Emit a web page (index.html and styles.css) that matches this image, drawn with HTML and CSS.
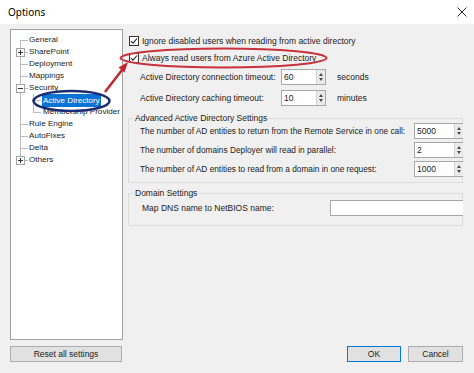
FILE: index.html
```html
<!DOCTYPE html>
<html lang="en">
<head>
    <meta charset="UTF-8">
    <meta name="viewport" content="width=device-width, initial-scale=1.0">
    <title>Options</title>
    <link rel="stylesheet" href="styles.css">
</head>
<body>
<div class="window">
    <div class="titlebar">
        <span class="title">Options</span>
        <svg class="close" width="10" height="10" viewBox="0 0 10 10"><path d="M0.5 0.5L9.5 9.5M9.5 0.5L0.5 9.5" stroke="#222" stroke-width="1"/></svg>
    </div>
    <div class="dialog">
        <div class="main">
            <ul class="tree">
                <li class="node first"><span class="gutter"></span><span class="text">General</span></li>
                <li class="node"><span class="gutter"><i class="exp plus"></i></span><span class="text">SharePoint</span></li>
                <li class="node"><span class="gutter"></span><span class="text">Deployment</span></li>
                <li class="node"><span class="gutter"></span><span class="text">Mappings</span></li>
                <li class="node"><span class="gutter"><i class="exp"></i></span><span class="text">Security</span></li>
                <li class="node child"><span class="gutter"></span><span class="text selected">Active Directory</span></li>
                <li class="node child last-child"><span class="gutter"></span><span class="text">Membership Provider</span></li>
                <li class="node"><span class="gutter"></span><span class="text">Rule Engine</span></li>
                <li class="node"><span class="gutter"></span><span class="text">AutoFixes</span></li>
                <li class="node"><span class="gutter"></span><span class="text">Delta</span></li>
                <li class="node last"><span class="gutter"><i class="exp plus"></i></span><span class="text">Others</span></li>
            </ul>
            <div class="panel">
                <label class="check"><span class="box"><svg width="8" height="8" viewBox="0 0 8 8"><path d="M1 4.2L3 6.2L7 1.5" fill="none" stroke="#222" stroke-width="1.1"/></svg></span>Ignore disabled users when reading from active directory</label>
                <label class="check"><span class="box"><svg width="8" height="8" viewBox="0 0 8 8"><path d="M1 4.2L3 6.2L7 1.5" fill="none" stroke="#222" stroke-width="1.1"/></svg></span>Always read users from Azure Active Directory</label>

                <div class="field timeout">
                    <span class="field-label">Active Directory connection timeout:</span>
                    <span class="num"><span class="val">60</span><span class="spin"><i class="up"></i><i class="down"></i></span></span>
                    <span class="unit">seconds</span>
                </div>
                <div class="field timeout">
                    <span class="field-label">Active Directory caching timeout:</span>
                    <span class="num"><span class="val">10</span><span class="spin"><i class="up"></i><i class="down"></i></span></span>
                    <span class="unit">minutes</span>
                </div>

                <div class="group advanced">
                    <div class="group-title">Advanced Active Directory Settings</div>
                    <div class="field">
                        <span class="field-label">The number of AD entities to return from the Remote Service in one call:</span>
                        <span class="num wide"><span class="val">5000</span><span class="spin"><i class="up"></i><i class="down"></i></span></span>
                    </div>
                    <div class="field">
                        <span class="field-label">The number of domains Deployer will read in parallel:</span>
                        <span class="num wide"><span class="val">2</span><span class="spin"><i class="up"></i><i class="down"></i></span></span>
                    </div>
                    <div class="field">
                        <span class="field-label">The number of AD entities to read from a domain in one request:</span>
                        <span class="num wide"><span class="val">1000</span><span class="spin"><i class="up"></i><i class="down"></i></span></span>
                    </div>
                </div>

                <div class="group domain">
                    <div class="group-title">Domain Settings</div>
                    <div class="field">
                        <span class="field-label">Map DNS name to NetBIOS name:</span>
                        <span class="textbox"></span>
                    </div>
                </div>
            </div>
        </div>
        <div class="footer">
            <button class="btn reset">Reset all settings</button>
            <div class="actions">
                <button class="btn ok">OK</button>
                <button class="btn cancel">Cancel</button>
            </div>
        </div>
    </div>

    <!-- hand-drawn callouts on top of the screenshot -->
    <svg class="annotations" width="474" height="373" viewBox="0 0 474 373">
        <ellipse cx="223.5" cy="58" rx="103" ry="9.5" fill="none" stroke="#c8323c" stroke-width="2"/>
        <ellipse cx="71.5" cy="101" rx="38" ry="10" fill="none" stroke="#1d2c72" stroke-width="2.5"/>
        <path d="M105 92L122 70" stroke="#c0262d" stroke-width="2.5" fill="none"/>
        <path d="M128 62L118.5 67.5L124.5 72.5Z" fill="#c0262d"/>
    </svg>
</div>
</body>
</html>
```

FILE: styles.css
```css
* { box-sizing: border-box; }
body { margin: 0; background: #f0f0f0; }

.window { position: relative; width: 474px; height: 373px; overflow: hidden; background: #f0f0f0;
    font-family: "Liberation Sans", Arial, sans-serif; font-size: 8.5px; color: #1b1b1b; }

.titlebar { height: 24px; background: #fff; display: flex; align-items: center;
    justify-content: space-between; padding: 0 7px 0 8px; }
.title { font-family: "Noto Sans", sans-serif; font-size: 10px; color: #000; }

.dialog { padding: 5px 11px 0 10px; }
.main { display: flex; gap: 5px; height: 311px; }

/* tree */
.tree { width: 113px; flex: none; margin: 0; padding: 4px 0 0; list-style: none; overflow: hidden;
    background: #fff; border: 1px solid #a0a0a0; font-size: 8.1px; }
.node { height: 12px; line-height: 12px; display: flex; align-items: center; white-space: nowrap;
    background:
        linear-gradient(#bcbcbc, #bcbcbc) 9px 6px / 8px 1px no-repeat,
        linear-gradient(#bcbcbc, #bcbcbc) 9px 0 / 1px 12px no-repeat; }
.node.first { background-size: 8px 1px, 1px 6px; background-position: 9px 6px, 9px 6px; }
.node.last { background-size: 8px 1px, 1px 6px; }
.node.child { padding-left: 13px;
    background:
        linear-gradient(#bcbcbc, #bcbcbc) 22px 6px / 8px 1px no-repeat,
        linear-gradient(#bcbcbc, #bcbcbc) 22px 0 / 1px 12px no-repeat,
        linear-gradient(#bcbcbc, #bcbcbc) 9px 0 / 1px 12px no-repeat; }
.node.last-child { background-size: 8px 1px, 1px 6px, 1px 12px; }
.gutter { width: 18px; height: 12px; flex: none; display: flex; align-items: center; padding-left: 5px; }
.node.child .text { padding: 0 1px; }
.text.selected { background: #0a74d6; color: #fff; line-height: 13px; }

.exp { display: block; width: 9px; height: 9px; border: 1px solid #a4a4a4; background:
    linear-gradient(#333, #333) center / 5px 1px no-repeat, #fff; }
.exp.plus { background:
    linear-gradient(#333, #333) center / 5px 1px no-repeat,
    linear-gradient(#333, #333) center / 1px 5px no-repeat, #fff; }

/* settings panel */
.panel { flex: 1; overflow: hidden; padding-top: 5px; }

.check { display: flex; align-items: center; gap: 3px; height: 14px; padding-left: 1px; white-space: nowrap; }
.check + .check { margin-top: 3px; }
.box { width: 10px; height: 10px; flex: none; border: 1px solid #333; background: #fff;
    display: flex; align-items: center; justify-content: center; }

.field { display: flex; align-items: center; height: 16px; padding-left: 12px; white-space: nowrap; }
.field-label { width: 141px; flex: none; }
.timeout { margin-top: 4px; }
.timeout + .timeout { margin-top: 5px; }
.unit { margin-left: 11px; }

.num { display: flex; width: 45px; height: 16px; flex: none; border: 1px solid #a8a8a8; background: #fff; }
.num.wide { width: 50px; }
.val { flex: 1; padding-left: 2px; line-height: 14px; }
.spin { width: 9px; display: flex; flex-direction: column; align-items: center; justify-content: center;
    gap: 2px; background: #ebebeb; border-left: 1px solid #d4d4d4; }
.spin i { width: 0; height: 0; border-left: 2.5px solid transparent; border-right: 2.5px solid transparent; }
.spin .up { border-bottom: 3px solid #4a4a4a; }
.spin .down { border-top: 3px solid #4a4a4a; }

.group { border: 1px solid #dcdcdc; padding: 0 0 5px 11px; }
.group-title { width: fit-content; margin: -6px 0 0 -6px; padding: 0 1px; line-height: 10px; background: #f0f0f0; }
.group .field { padding-left: 0; }
.group .field + .field { margin-top: 3px; }
.advanced { margin-top: 12px; }
.advanced .field:first-of-type { margin-top: 5px; }
.advanced .field-label { width: 274px; font-size: 8.3px; }
.domain { margin-top: 10px; padding-bottom: 9px; }
.domain .field { margin-top: 2px; padding-left: 2px; }
.domain .field-label { width: 188px; }
.textbox { width: 200px; height: 16px; flex: none; border: 1px solid #a8a8a8; background: #fff; }

/* bottom buttons */
.footer { display: flex; justify-content: space-between; margin-top: 6px; }
.btn { height: 16px; padding: 0; border: 1px solid #adadad; background: #e1e1e1;
    font: inherit; color: #1b1b1b; }
.reset { width: 112px; }
.actions { display: flex; gap: 7px; }
.ok { width: 54px; border-color: #0078d7; }
.cancel { width: 55px; }

.annotations { position: absolute; left: 0; top: 0; pointer-events: none; }
```
